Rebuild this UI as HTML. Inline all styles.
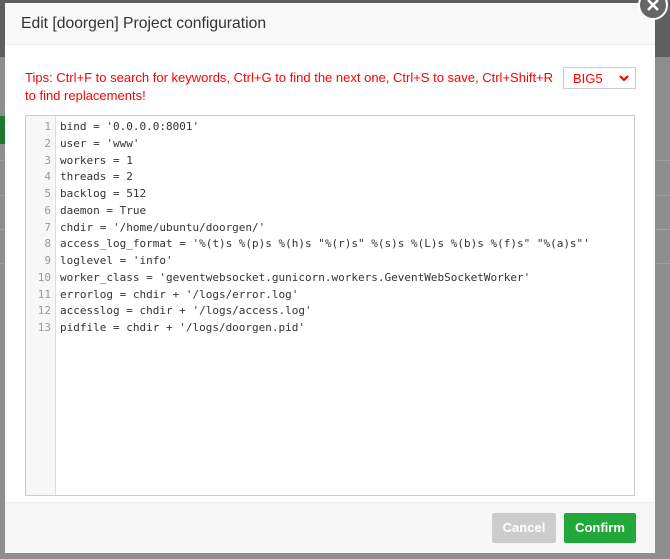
<!DOCTYPE html>
<html><head><meta charset="utf-8"><style>
body{margin:0;width:670px;height:559px;overflow:hidden;background:#8e8e8e;font-family:"Liberation Sans",sans-serif;position:relative}
.top{position:absolute;left:0;top:0;width:670px;height:57px;background:#5f5f5f}
.g1{position:absolute;left:0;top:116px;width:5px;height:28px;background:#1f7a30}
.ln{position:absolute;left:0;width:670px;height:1px;background:#a0a0a0}
.modal{position:absolute;left:5px;top:3px;width:650px;height:549px;background:#fff}
.hd{height:41px;background:#f8f8f8;border-bottom:1px solid #eee;font-size:15.7px;color:#333;line-height:41px;padding-left:16px}
.tips{position:absolute;left:20px;top:66px;width:530px;font-size:13px;color:#f00;line-height:18px}
.sel{position:absolute;left:558px;top:64px;height:22px;border:1px solid #ccc;color:#f00;font-size:13px;line-height:22px;padding-left:9px;box-sizing:border-box;width:73px}
.sel svg{position:absolute;right:6px;top:7px}
.ed{position:absolute;left:20px;top:112px;width:610px;height:381px;border:1px solid #ccc;box-sizing:border-box;font-family:"DejaVu Sans Mono","Liberation Mono",monospace;font-size:11px;color:#333}
.gut{position:absolute;left:0;top:0;width:30px;height:100%;background:#f7f7f7;border-right:1px solid #ddd;color:#999;text-align:right;box-sizing:border-box;padding-right:4px;padding-top:3px;line-height:16.75px}
.code{position:absolute;left:34px;top:3px;line-height:16.75px;white-space:pre}
.ft{position:absolute;left:0;top:499px;width:650px;height:50px;background:#f5f6f5;border-top:1px solid #eee}
.btn{position:absolute;top:10px;height:30px;border-radius:2px;color:#fff;font-weight:bold;font-size:13px;line-height:30px;text-align:center}
.close{position:absolute;left:638px;top:-10px;width:26px;height:26px;border-radius:50%;background:#666;border:2px solid #fff}
</style></head><body>
<div class="top"></div>
<div class="g1"></div>
<div class="ln" style="top:160px"></div><div class="ln" style="top:195px"></div><div class="ln" style="top:229px"></div><div class="ln" style="top:263px"></div>
<div class="modal">
<div class="hd">Edit [doorgen] Project configuration</div>
<div class="tips">Tips: Ctrl+F to search for keywords, Ctrl+G to find the next one, Ctrl+S to save, Ctrl+Shift+R to find replacements!</div>
<div class="sel">BIG5<svg width="10" height="7" viewBox="0 0 10 7"><path d="M1 1L5 5L9 1" stroke="#f00" stroke-width="2.2" fill="none"/></svg></div>
<div class="ed"><div class="gut">1<br>2<br>3<br>4<br>5<br>6<br>7<br>8<br>9<br>10<br>11<br>12<br>13</div>
<div class="code">bind = '0.0.0.0:8001'
user = 'www'
workers = 1
threads = 2
backlog = 512
daemon = True
chdir = '/home/ubuntu/doorgen/'
access_log_format = '%(t)s %(p)s %(h)s "%(r)s" %(s)s %(L)s %(b)s %(f)s" "%(a)s"'
loglevel = 'info'
worker_class = 'geventwebsocket.gunicorn.workers.GeventWebSocketWorker'
errorlog = chdir + '/logs/error.log'
accesslog = chdir + '/logs/access.log'
pidfile = chdir + '/logs/doorgen.pid'</div></div>
<div class="ft"><div class="btn" style="left:487px;width:64px;background:#ccc">Cancel</div><div class="btn" style="left:559px;width:72px;background:#22a83a">Confirm</div></div>
</div>
<div class="close"><svg width="26" height="26" viewBox="0 0 26 26"><path d="M8 8L18 18M18 8L8 18" stroke="#fff" stroke-width="2.5"/></svg></div>
</body></html>
